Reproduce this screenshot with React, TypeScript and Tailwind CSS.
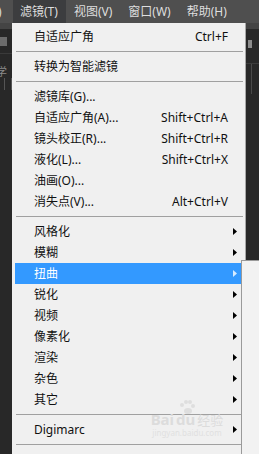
import React from "react";

type Item =
  | { type: "item"; label: string; shortcut?: string; arrow?: boolean; active?: boolean }
  | { type: "sep" };

const items: Item[] = [
  { type: "item", label: "自适应广角", shortcut: "Ctrl+F" },
  { type: "sep" },
  { type: "item", label: "转换为智能滤镜" },
  { type: "sep" },
  { type: "item", label: "滤镜库(G)..." },
  { type: "item", label: "自适应广角(A)...", shortcut: "Shift+Ctrl+A" },
  { type: "item", label: "镜头校正(R)...", shortcut: "Shift+Ctrl+R" },
  { type: "item", label: "液化(L)...", shortcut: "Shift+Ctrl+X" },
  { type: "item", label: "油画(O)..." },
  { type: "item", label: "消失点(V)...", shortcut: "Alt+Ctrl+V" },
  { type: "sep" },
  { type: "item", label: "风格化", arrow: true },
  { type: "item", label: "模糊", arrow: true },
  { type: "item", label: "扭曲", arrow: true, active: true },
  { type: "item", label: "锐化", arrow: true },
  { type: "item", label: "视频", arrow: true },
  { type: "item", label: "像素化", arrow: true },
  { type: "item", label: "渲染", arrow: true },
  { type: "item", label: "杂色", arrow: true },
  { type: "item", label: "其它", arrow: true },
  { type: "sep" },
  { type: "item", label: "Digimarc", arrow: true },
  { type: "sep" },
];

function Arrow({ active }: { active?: boolean }) {
  return (
    <svg width="4" height="7" viewBox="0 0 4 7" className="block">
      <path d="M0 0 L4 3.5 L0 7 Z" fill={active ? "#d6ebff" : "#000000"} />
    </svg>
  );
}

export default function App() {
  return (
    <div className="relative w-[259px] h-[454px] overflow-hidden bg-[#282828] font-['Noto_Sans','Noto_Sans_CJK_SC',sans-serif] text-[12px] leading-none flex flex-col">
      {/* Menu bar */}
      <div className="h-[23px] bg-[#4f4f4f] flex items-stretch text-[#dedede] shrink-0">
        <div className="w-[13px] flex items-center overflow-hidden">
          <span className="-ml-[2px]">)</span>
        </div>
        <div className="flex items-center pl-[7px] pr-[8px] bg-[#3c3d3f]">滤镜(T)</div>
        <div className="flex items-center px-[8px]">视图(V)</div>
        <div className="flex items-center px-[8px]">窗口(W)</div>
        <div className="flex items-center px-[8px]">帮助(H)</div>
      </div>

      <div className="flex flex-1 min-h-0">
        {/* left strip */}
        <div className="w-[12px] flex flex-col shrink-0 overflow-hidden">
          <div className="h-[6px] bg-[#444444]" />
          <div className="h-[8px]" />
          <div className="h-[9px] w-[7px] bg-[#6c6c6c]" />
          <div className="h-[8px] border-b border-[#3a3a3a]" />
          <div className="h-[10px]" />
          <div className="h-[14px] text-[11px] text-[#8a8a8a] -ml-[4px] flex items-center">学</div>
          <div className="h-[12px] flex">
            <div className="w-[1px] ml-[4px] bg-[#555555]" />
            <div className="w-[1px] ml-[6px] bg-[#555555]" />
          </div>
          <div className="flex-1" />
        </div>

        {/* menu panel */}
        <div className="w-[234px] shrink-0 bg-[#f0f0f0] pt-[3px] pl-[3px] pr-[4px] border-r border-[#a8a8a8] flex flex-col text-[#111111]">
          {items.map((it, i) =>
            it.type === "sep" ? (
              <div key={i} className="h-[9px] pt-[4px]">
                <div className="h-[1px] ml-[1px] -mr-[2px] bg-[#a0a0a0]" />
              </div>
            ) : (
              <div
                key={i}
                className={
                  "h-[21px] flex items-center pl-[19px] shrink-0 " +
                  (it.active ? "bg-[#3399ff] text-white" : "")
                }
              >
                <span className="flex-1 whitespace-nowrap">{it.label}</span>
                {it.shortcut && <span className="whitespace-nowrap">{it.shortcut}</span>}
                <div className="w-[13px] h-full flex items-center pl-[5px]">
                  {it.arrow && <Arrow active={it.active} />}
                </div>
              </div>
            )
          )}
        </div>

        {/* right strip */}
        <div className="flex-1 flex flex-col overflow-hidden">
          <div className="h-[6px] bg-[#444444]" />
          <div className="h-[11px]" />
          <div className="h-[8px] w-[4px] ml-[2px] bg-[#8c8c8c]" />
          <div className="h-[16px] border-b border-[#3c3c3c]" />
          <div className="h-[30px] flex">
            <div className="w-[1px] ml-[5px] bg-[#4a4a4a]" />
          </div>
          <div className="flex-1" />
        </div>
      </div>

      {/* submenu peeking */}
      <div className="absolute left-[241px] top-[260px] right-0 bottom-0 bg-[#f2f2f2] border-l border-t border-[#9a9a9a]" />

      {/* watermark */}
      <div className="absolute left-[142px] top-[400px] w-[90px] flex flex-col items-center text-[#d9d9d9] pointer-events-none">
        <svg width="18" height="14" viewBox="0 0 18 14" className="-mb-[2px]">
          <circle cx="4" cy="5" r="2" fill="#dedede" />
          <circle cx="8" cy="2" r="2" fill="#dedede" />
          <circle cx="12" cy="2" r="2" fill="#dedede" />
          <circle cx="15" cy="6" r="2" fill="#dedede" />
          <ellipse cx="10" cy="11" rx="4" ry="3" fill="#dedede" />
        </svg>
        <div className="flex items-end gap-[2px] text-[15px] font-bold text-[#dcdcdc]">
          <span>Bai</span>
          <span>du</span>
          <span className="text-[13px] font-normal">经验</span>
        </div>
        <div className="text-[8px] mt-[2px] text-[#e0e0e0]">jingyan.baidu.com</div>
      </div>
    </div>
  );
}
